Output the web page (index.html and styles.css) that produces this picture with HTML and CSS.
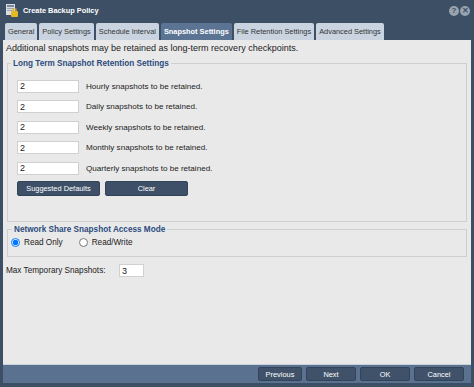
FILE: index.html
```html
<!DOCTYPE html>
<html lang="en">
<head>
    <meta charset="UTF-8">
    <title>Create Backup Policy</title>
    <link rel="stylesheet" href="styles.css">
</head>
<body>
    <div class="window">
        <div class="titlebar">
            <svg class="title-icon" width="12" height="13" viewBox="0 0 12 13">
                <rect x="0" y="0" width="9" height="11" fill="#d8dde3"/>
                <rect x="1" y="1" width="7" height="2" fill="#7a8796"/>
                <rect x="1" y="4" width="7" height="1" fill="#9aa5b1"/>
                <rect x="1" y="6" width="7" height="1" fill="#9aa5b1"/>
                <rect x="5" y="7" width="7" height="6" rx="1" fill="#e8b820"/>
                <rect x="7" y="5" width="3" height="3" fill="none" stroke="#e8b820" stroke-width="1"/>
            </svg>
            <span class="title">Create Backup Policy</span>
            <span class="tools">
                <span class="tool">?</span>
                <span class="tool">&#x2715;</span>
            </span>
        </div>
        <div class="tabs">
            <div class="tab">General</div>
            <div class="tab">Policy Settings</div>
            <div class="tab">Schedule Interval</div>
            <div class="tab active">Snapshot Settings</div>
            <div class="tab">File Retention Settings</div>
            <div class="tab">Advanced Settings</div>
        </div>
        <div class="content">
            <p class="intro">Additional snapshots may be retained as long-term recovery checkpoints.</p>
            <fieldset class="group retention">
                <legend>Long Term Snapshot Retention Settings</legend>
                <div class="row"><input class="field" value="2"><label>Hourly snapshots to be retained.</label></div>
                <div class="row"><input class="field" value="2"><label>Daily snapshots to be retained.</label></div>
                <div class="row"><input class="field" value="2"><label>Weekly snapshots to be retained.</label></div>
                <div class="row"><input class="field" value="2"><label>Monthly snapshots to be retained.</label></div>
                <div class="row"><input class="field" value="2"><label>Quarterly snapshots to be retained.</label></div>
                <div class="actions">
                    <button class="btn">Suggested Defaults</button>
                    <button class="btn">Clear</button>
                </div>
            </fieldset>
            <fieldset class="group access">
                <legend>Network Share Snapshot Access Mode</legend>
                <label class="radio"><input type="radio" name="mode" checked> Read Only</label>
                <label class="radio"><input type="radio" name="mode"> Read/Write</label>
            </fieldset>
            <div class="maxrow">
                <label>Max Temporary Snapshots:</label>
                <input class="field small" value="3">
            </div>
        </div>
        <div class="footer">
            <button class="btn foot">Previous</button>
            <button class="btn foot">Next</button>
            <button class="btn foot">OK</button>
            <button class="btn foot">Cancel</button>
        </div>
    </div>
</body>
</html>
```

FILE: styles.css
```css
body {
    margin: 0;
    padding: 0;
    font-family: "Liberation Sans", Arial, sans-serif;
    font-size: 8px;
    background: #3a4b60;
}
.window {
    width: 474px;
    height: 387px;
    display: flex;
    flex-direction: column;
    background: #3d4f65;
    box-sizing: border-box;
    padding: 0 3px 4px 3px;
}
.titlebar {
    height: 21px;
    display: flex;
    align-items: center;
    padding-left: 3px;
    color: #fff;
}
.title-icon {
    margin-right: 5px;
}
.title {
    font-weight: bold;
    font-size: 7.4px;
}
.tools {
    margin-left: auto;
    display: flex;
    gap: 1px;
    margin-right: 1px;
}
.tool {
    width: 10px;
    height: 10px;
    border-radius: 50%;
    background: #9aa4b0;
    color: #3d4f65;
    font-size: 8px;
    font-weight: bold;
    display: flex;
    align-items: center;
    justify-content: center;
    line-height: 1;
}
.tabs {
    height: 19px;
    display: flex;
    gap: 2px;
    padding-left: 2px;
    align-items: flex-end;
}
.tab {
    height: 17px;
    line-height: 17px;
    padding: 0 3px;
    font-size: 7.4px;
    background: #c9d4e0;
    color: #333;
    border-radius: 2px 2px 0 0;
}
.tab.active {
    background: #5b7493;
    color: #fff;
    font-weight: bold;
}
.content {
    flex: 1;
    background: #e9e9e9;
    padding: 1px 4px 0 3px;
    color: #222;
}
.intro {
    margin: 2px 0 6px 0;
    font-size: 9px;
}
.group {
    margin: 0 0 0 1px;
    border: 1px solid #cfcfcf;
    padding: 0 9px 0 9px;
}
.group legend {
    color: #2c4b7e;
    font-weight: bold;
    font-size: 8.2px;
    padding: 0 2px;
    margin-left: -6px;
}
.retention {
    height: 163px;
    box-sizing: border-box;
    padding-top: 8px;
}
.row {
    display: flex;
    align-items: center;
    height: 20.5px;
    font-size: 8.1px;
}
.field {
    width: 62px;
    height: 13px;
    box-sizing: border-box;
    border: 1px solid #d0d0d0;
    background: #fff;
    font-family: "Liberation Sans", Arial, sans-serif;
    font-size: 9px;
    padding: 0 2px;
    margin: 0 7px 0 0;
    color: #222;
}
.actions {
    display: flex;
    gap: 5px;
    margin-top: 2px;
}
.btn {
    width: 83px;
    height: 15px;
    background: #3e5068;
    color: #fff;
    border: 1px solid #33445a;
    border-radius: 2px;
    font-family: "Liberation Sans", Arial, sans-serif;
    font-size: 7.4px;
    padding: 0;
}
.access {
    margin-top: 3px;
    height: 32px;
    box-sizing: border-box;
    padding: 4px 3px 0 3px;
    display: flex;
    align-items: flex-start;
}
.access legend {
    margin-left: 1px;
}
.radio {
    display: flex;
    align-items: center;
    font-size: 8.2px;
    margin-right: 16px;
}
.radio input {
    margin: 0 4px 0 0;
    width: 9px;
    height: 9px;
}
.maxrow {
    display: flex;
    align-items: center;
    margin-top: 7px;
    font-size: 8.2px;
}
.maxrow label {
    width: 113px;
    white-space: nowrap;
}
.field.small {
    width: 25px;
}
.footer {
    height: 18px;
    background: #5a7190;
    border-top: 1px solid #c8d3de;
    display: flex;
    justify-content: flex-end;
    align-items: center;
    gap: 4px;
    padding-right: 7px;
}
.btn.foot {
    width: 50px;
    height: 14px;
    background: #3f526a;
}
.btn.foot:first-child {
    width: 44px;
}
```
